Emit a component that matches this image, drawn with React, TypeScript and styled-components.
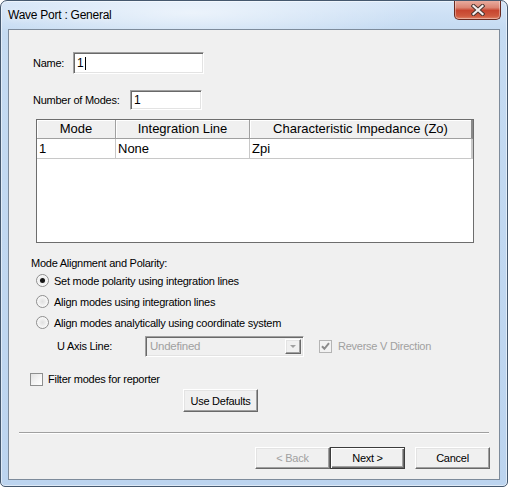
import React from "react";
import styled, { createGlobalStyle, css } from "styled-components";

const GlobalStyle = createGlobalStyle`
  html, body { margin: 0; padding: 0; }
  body { background: #ffffff; font-family: "Liberation Sans", Arial, sans-serif; }
  *, *::before, *::after { box-sizing: border-box; }
`;

const Frame = styled.div`
  width: 508px;
  height: 487px;
  display: flex;
  flex-direction: column;
  border: 1px solid #45586e;
  border-radius: 7px 7px 5px 5px;
  padding: 0 7px 6px 7px;
  background:
    radial-gradient(ellipse 230px 34px at 190px 12px, rgba(255, 255, 255, 0.6), rgba(255, 255, 255, 0) 100%),
    linear-gradient(180deg, #d6e6f8 0px, #c5dbf2 28px, #bcd4ef 100%);
  box-shadow: inset 0 0 0 1px rgba(255, 255, 255, 0.5);
  overflow: hidden;
`;

const TitleBar = styled.div`
  height: 28px;
  display: flex;
  align-items: flex-start;
  justify-content: space-between;
`;

const Title = styled.div`
  padding-top: 7px;
  font-size: 12px;
  line-height: 14px;
  letter-spacing: -0.25px;
  color: #000;
  text-shadow: 0 0 6px rgba(255, 255, 255, 0.9);
`;

const CloseButton = styled.div`
  width: 47px;
  height: 20px;
  margin-top: -1px;
  margin-right: -1px;
  border: 1px solid #6a2a20;
  border-top: none;
  border-radius: 0 0 5px 5px;
  background: linear-gradient(180deg, #eab1a5 0%, #db8573 40%, #c7452f 55%, #cf5a3f 85%, #e1876b 100%);
  box-shadow: inset 0 0 0 1px rgba(255, 255, 255, 0.35);
  display: flex;
  align-items: center;
  justify-content: center;
`;

const Client = styled.div`
  flex: 1;
  display: flex;
  flex-direction: column;
  background: #f0f0f0;
  border: 1px solid #7d8b9b;
  font-size: 11px;
  letter-spacing: -0.25px;
  color: #000;
`;

const FieldRow = styled.div<{ $top: number; $indent: number; $h: number }>`
  display: flex;
  align-items: center;
  margin-top: ${(p) => p.$top}px;
  padding-left: ${(p) => p.$indent}px;
  height: ${(p) => p.$h}px;
`;

const FieldLabel = styled.span<{ $w: number }>`
  flex: none;
  width: ${(p) => p.$w}px;
`;

const sunken = css`
  border: 1px solid;
  border-color: #a0a0a0 #ffffff #ffffff #a0a0a0;
  box-shadow: inset 1px 1px 0 #696969, inset -1px -1px 0 #e3e3e3;
`;

const raised = css`
  border: 1px solid;
  border-color: #ffffff #696969 #696969 #ffffff;
  box-shadow: inset -1px -1px 0 #a0a0a0, inset 1px 1px 0 #e3e3e3;
`;

const TextBox = styled.div<{ $w: number }>`
  flex: none;
  width: ${(p) => p.$w}px;
  height: 100%;
  background: #ffffff;
  ${sunken};
  display: flex;
  align-items: center;
  padding-left: 3px;
  font-size: 12px;
  letter-spacing: 0;
`;

const Caret = styled.span`
  display: inline-block;
  width: 1px;
  height: 13px;
  margin-left: 1px;
  background: #000;
`;

const Table = styled.div`
  margin: 9px 0 0 27px;
  width: 438px;
  height: 124px;
  background: #ffffff;
  border: 1px solid #6d6d6d;
  display: flex;
  flex-direction: column;
  font-size: 13px;
  letter-spacing: 0;
`;

const TableRow = styled.div<{ $h: number }>`
  display: grid;
  grid-template-columns: 79px 134px 223px;
  height: ${(p) => p.$h}px;
`;

const HeadCell = styled.div`
  background: #f0f0f0;
  border-right: 1px solid #a0a0a0;
  border-bottom: 1px solid #a0a0a0;
  box-shadow: inset 1px 1px 0 #ffffff;
  text-align: center;
  line-height: 18px;
  &:last-child {
    border-right: 2px solid #8a8a8a;
  }
`;

const Cell = styled.div`
  border-right: 1px solid #c8c8c8;
  border-bottom: 1px solid #c8c8c8;
  padding-left: 2px;
  line-height: 19px;
  &:last-child {
    border-right: 2px solid #c8c8c8;
  }
`;

const SectionLabel = styled.div`
  margin-top: 13px;
  padding-left: 22px;
  line-height: 14px;
`;

const OptionRow = styled.div<{ $indent: number; $h: number; $top?: number; $gap?: number }>`
  display: flex;
  align-items: center;
  gap: ${(p) => p.$gap ?? 5}px;
  height: ${(p) => p.$h}px;
  padding-left: ${(p) => p.$indent}px;
  margin-top: ${(p) => p.$top ?? 0}px;
`;

const Radio = styled.span`
  flex: none;
  width: 13px;
  height: 13px;
  border-radius: 50%;
  border: 1px solid #8e8e8e;
  background: radial-gradient(circle at 50% 50%, #e0e0e0 0%, #f2f2f2 50%, #fdfdfd 80%);
  display: flex;
  align-items: center;
  justify-content: center;
`;

const RadioDot = styled.span`
  width: 5px;
  height: 5px;
  border-radius: 50%;
  background: #161616;
`;

const CheckBox = styled.span<{ $disabled?: boolean }>`
  flex: none;
  width: 13px;
  height: 13px;
  border: 1px solid ${(p) => (p.$disabled ? "#b4b4b4" : "#8e8f8f")};
  background: ${(p) =>
    p.$disabled ? "#f2f2f2" : "linear-gradient(135deg, #e2e2e2 0%, #f6f6f6 60%, #ffffff 100%)"};
  display: flex;
  align-items: center;
  justify-content: center;
`;

const DisabledText = styled.span`
  color: #a0a0a0;
`;

const Combo = styled.div`
  flex: none;
  width: 159px;
  height: 21px;
  display: flex;
  background: #f0f0f0;
  ${sunken};
  padding: 2px;
`;

const ComboText = styled.div`
  flex: 1;
  color: #a0a0a0;
  padding-left: 2px;
  line-height: 15px;
  font-size: 11.5px;
`;

const ComboArrow = styled.div`
  flex: none;
  width: 16px;
  background: #f0f0f0;
  ${raised};
  display: flex;
  align-items: center;
  justify-content: center;
`;

const ArrowGlyph = styled.span`
  width: 0;
  height: 0;
  border-left: 3px solid transparent;
  border-right: 3px solid transparent;
  border-top: 3px solid #a0a0a0;
  margin-top: 1px;
`;

const Button = styled.button<{ $w: number; $h: number; $default?: boolean; $disabled?: boolean }>`
  flex: none;
  width: ${(p) => p.$w}px;
  height: ${(p) => p.$h}px;
  padding: 0;
  font-family: "Liberation Sans", Arial, sans-serif;
  font-size: 11px;
  letter-spacing: -0.25px;
  color: ${(p) => (p.$disabled ? "#a0a0a0" : "#000")};
  background: #f0f0f0;
  ${(p) =>
    p.$default
      ? css`
          border: 1px solid #3c3c3c;
          box-shadow: inset 1px 1px 0 #ffffff, inset -1px -1px 0 #696969, inset -2px -2px 0 #a0a0a0;
        `
      : raised};
`;

const DefaultsRow = styled.div`
  display: flex;
  margin-top: 3px;
  padding-left: 174px;
`;

const Separator = styled.div`
  margin: 20px 10px 0 10px;
  height: 2px;
  border-top: 1px solid #a0a0a0;
  border-bottom: 1px solid #ffffff;
`;

const ButtonBar = styled.div`
  display: flex;
  justify-content: flex-end;
  margin-top: 13px;
  padding-right: 9px;
`;

const Spacer = styled.span<{ $w: number }>`
  width: ${(p) => p.$w}px;
  flex: none;
`;

const CheckMark = ({ color }: { color: string }) => (
  <svg width="9" height="9" viewBox="0 0 9 9">
    <path d="M1 4.2 L3.4 6.8 L8 1.2" fill="none" stroke={color} strokeWidth="2" />
  </svg>
);

export default function App() {
  return (
    <>
      <GlobalStyle />
      <Frame>
        <TitleBar>
          <Title>Wave Port : General</Title>
          <CloseButton>
            <svg width="14" height="12" viewBox="0 0 14 12">
              <path d="M2.5 2 L11.5 10 M11.5 2 L2.5 10" stroke="#4a3530" strokeWidth="4.2" strokeLinecap="square" />
              <path d="M2.5 2 L11.5 10 M11.5 2 L2.5 10" stroke="#f4eeee" strokeWidth="2.2" strokeLinecap="square" />
            </svg>
          </CloseButton>
        </TitleBar>
        <Client>
          <FieldRow $top={22} $indent={24} $h={22}>
            <FieldLabel $w={40}>Name:</FieldLabel>
            <TextBox $w={131}>
              1<Caret />
            </TextBox>
          </FieldRow>
          <FieldRow $top={16} $indent={24} $h={20}>
            <FieldLabel $w={97}>Number of Modes:</FieldLabel>
            <TextBox $w={72}>1</TextBox>
          </FieldRow>

          <Table>
            <TableRow $h={19}>
              <HeadCell>Mode</HeadCell>
              <HeadCell>Integration Line</HeadCell>
              <HeadCell>Characteristic Impedance (Zo)</HeadCell>
            </TableRow>
            <TableRow $h={20}>
              <Cell>1</Cell>
              <Cell>None</Cell>
              <Cell>Zpi</Cell>
            </TableRow>
          </Table>

          <SectionLabel>Mode Alignment and Polarity:</SectionLabel>
          <OptionRow $indent={27} $h={21}>
            <Radio>
              <RadioDot />
            </Radio>
            <span>Set mode polarity using integration lines</span>
          </OptionRow>
          <OptionRow $indent={27} $h={21}>
            <Radio />
            <span>Align modes using integration lines</span>
          </OptionRow>
          <OptionRow $indent={27} $h={21}>
            <Radio />
            <span>Align modes analytically using coordinate system</span>
          </OptionRow>

          <OptionRow $indent={48} $h={22} $top={2} $gap={0}>
            <FieldLabel $w={88}>U Axis Line:</FieldLabel>
            <Combo>
              <ComboText>Undefined</ComboText>
              <ComboArrow>
                <ArrowGlyph />
              </ComboArrow>
            </Combo>
            <Spacer $w={15} />
            <CheckBox $disabled>
              <CheckMark color="#8c8c8c" />
            </CheckBox>
            <Spacer $w={6} />
            <DisabledText>Reverse V Direction</DisabledText>
          </OptionRow>

          <OptionRow $indent={21} $h={14} $top={15}>
            <CheckBox />
            <span>Filter modes for reporter</span>
          </OptionRow>

          <DefaultsRow>
            <Button $w={75} $h={23}>Use Defaults</Button>
          </DefaultsRow>

          <Separator />

          <ButtonBar>
            <Button $w={75} $h={22} $disabled>
              &lt; Back
            </Button>
            <Button $w={75} $h={22} $default>
              Next &gt;
            </Button>
            <Spacer $w={10} />
            <Button $w={75} $h={22}>Cancel</Button>
          </ButtonBar>
        </Client>
      </Frame>
    </>
  );
}
